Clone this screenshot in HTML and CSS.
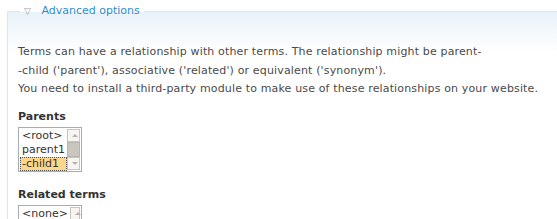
FILE: index.html
```html
<!DOCTYPE html>
<html lang="en">

<head>
    <meta charset="UTF-8" />
    <title>Advanced options</title>
    <link rel="stylesheet" href="styles.css">
</head>

<body>
    <fieldset class="advanced">
        <legend><span class="toggle">&#9661;</span> <a href="#">Advanced options</a></legend>
        <p class="description">
            Terms can have a relationship with other terms. The relationship might be parent-<br>
            -child ('parent'), associative ('related') or equivalent ('synonym').<br>
            You need to install a third-party module to make use of these relationships on your website.
        </p>

        <div class="form-item">
            <label>Parents</label>
            <div class="listbox">
                <ul class="options">
                    <li>&lt;root&gt;</li>
                    <li>parent1</li>
                    <li class="selected">-child1</li>
                </ul>
                <div class="scrollbar">
                    <span class="arrow up"></span>
                    <span class="thumb"></span>
                    <span class="arrow down"></span>
                </div>
            </div>
        </div>

        <div class="form-item">
            <label>Related terms</label>
            <div class="listbox">
                <ul class="options">
                    <li>&lt;none&gt;</li>
                    <li>parent1</li>
                    <li>child1</li>
                </ul>
                <div class="scrollbar">
                    <span class="arrow up"></span>
                    <span class="thumb"></span>
                    <span class="arrow down"></span>
                </div>
            </div>
        </div>
    </fieldset>
</body>

</html>
```

FILE: styles.css
```css
body {
    margin: 0;
    font-family: "DejaVu Sans", Verdana, sans-serif;
    font-size: 11px;
    color: #4a4a4a;
    background: #fff;
    overflow: hidden;
}

.advanced {
    margin: 4px 0 0 7px;
    padding: 0 0 0 10px;
    border: 0;
    border-top: 1px solid #dae7f2;
    border-left: 1px solid #dae7f2;
    background: linear-gradient(#e9f2f9, #fff 40px);
    min-height: 300px;
}

.advanced legend {
    padding: 0 4px;
    margin-left: 2px;
    line-height: 14px;
}

.toggle {
    color: #999;
    font-size: 9px;
    margin-right: 7px;
}

.advanced legend a {
    color: #2f8dcb;
    text-decoration: none;
    font-size: 11px;
}

.description {
    margin: 25px 0 0;
    line-height: 18.5px;
    letter-spacing: 0.15px;
}

.form-item {
    margin-top: 11px;
}

.form-item + .form-item {
    margin-top: 16px;
}

.form-item label {
    display: block;
    font-weight: bold;
    color: #333;
    margin-bottom: 4px;
}

.listbox {
    display: flex;
    width: 62px;
    height: 43px;
    border: 1px solid #a5acb2;
    background: #fff;
    overflow: hidden;
}

.options {
    list-style: none;
    margin: 0;
    padding: 1px 0 0 1px;
    flex: 1;
    font-size: 11px;
    line-height: 14px;
    color: #333;
}

.options li {
    padding: 0 2px;
    white-space: nowrap;
}

.options .selected {
    background: #fdd68b;
    outline: 1px dotted #555;
    outline-offset: -1px;
}

.scrollbar {
    width: 15px;
    margin: 1px 1px 1px 0;
    display: flex;
    flex-direction: column;
    background: #f1f0ec;
}

.arrow {
    height: 11px;
    border: 1px solid #c8c6bd;
    background: #f6f5f1;
    position: relative;
}

.arrow::after {
    content: "";
    position: absolute;
    left: 4px;
    border-left: 3px solid transparent;
    border-right: 3px solid transparent;
}

.arrow.up::after {
    top: 4px;
    border-bottom: 3px solid #b5b3aa;
}

.arrow.down::after {
    top: 4px;
    border-top: 3px solid #b5b3aa;
}

.thumb {
    flex: 1;
    background: #c9c6bf;
    border: 1px solid #b8b5ad;
}
```
